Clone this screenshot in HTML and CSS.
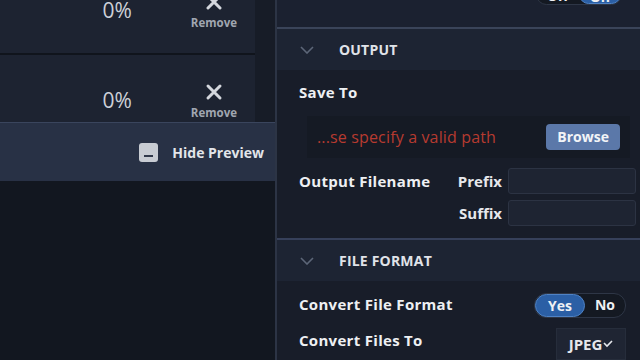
FILE: index.html
```html
<!DOCTYPE html>
<html lang="en">
	<head>
		<meta charset="UTF-8" />
		<meta name="viewport" content="width=device-width, initial-scale=1.0" />
		<title>Export</title>
		<link rel="stylesheet" href="styles.css">
	</head>
	<body>
		<div class="left">
			<div class="jobs">
				<div class="job-list">
					<div class="job">
						<span class="progress">0%</span>
						<button class="remove">
							<svg width="18" height="18" viewBox="0 0 18 18"><path d="M3 3 L15 15 M15 3 L3 15" stroke="#d4d7dd" stroke-width="3" stroke-linecap="round"/></svg>
							<span>Remove</span>
						</button>
					</div>
					<div class="job">
						<span class="progress">0%</span>
						<button class="remove">
							<svg width="18" height="18" viewBox="0 0 18 18"><path d="M3 3 L15 15 M15 3 L3 15" stroke="#d4d7dd" stroke-width="3" stroke-linecap="round"/></svg>
							<span>Remove</span>
						</button>
					</div>
				</div>
				<div class="gutter"></div>
			</div>
			<div class="preview-bar">
				<span class="preview-icon"><i></i></span>
				<span>Hide Preview</span>
			</div>
			<div class="preview-area"></div>
		</div>

		<div class="right">
			<div class="top-section">
				<div class="switch small">
					<span>Off</span>
					<span class="on">On</span>
				</div>
			</div>

			<div class="section-head">
				<svg width="14" height="8" viewBox="0 0 14 8"><path d="M1 1 L7 7 L13 1" fill="none" stroke="#5c6678" stroke-width="1.6"/></svg>
				<span>OUTPUT</span>
			</div>
			<div class="section-body">
				<div class="label">Save To</div>
				<div class="path-box">
					<span class="path-error">...se specify a valid path</span>
					<button class="browse">Browse</button>
				</div>
				<div class="filename">
					<div class="label">Output Filename</div>
					<div class="fields">
						<label>Prefix <input type="text" /></label>
						<label>Suffix <input type="text" /></label>
					</div>
				</div>
			</div>

			<div class="section-head">
				<svg width="14" height="8" viewBox="0 0 14 8"><path d="M1 1 L7 7 L13 1" fill="none" stroke="#5c6678" stroke-width="1.6"/></svg>
				<span>FILE FORMAT</span>
			</div>
			<div class="section-body format">
				<div class="row">
					<div class="label">Convert File Format</div>
					<div class="switch">
						<span class="on">Yes</span>
						<span>No</span>
					</div>
				</div>
				<div class="row">
					<div class="label">Convert Files To</div>
					<div class="select">JPEG<svg width="10" height="8" viewBox="0 0 10 8"><path d="M1 3 L4 6 L9 1" fill="none" stroke="#e6e8ec" stroke-width="1.6"/></svg></div>
				</div>
			</div>
		</div>
	</body>
</html>
```

FILE: styles.css
```css
* {
	box-sizing: border-box;
}
body {
	margin: 0;
	width: 640px;
	height: 360px;
	overflow: hidden;
	display: flex;
	font-family: "Open Sans", Arial, sans-serif;
	background: #131820;
	color: #e6e8ec;
}
.left {
	width: 275px;
	display: flex;
	flex-direction: column;
}
.jobs {
	height: 122px;
	overflow: hidden;
	display: flex;
}
.job-list {
	flex: 1;
	margin-top: -35px;
}
.job {
	height: 90px;
	background: #1d2331;
	border-bottom: 2px solid #10141c;
	display: flex;
	justify-content: flex-end;
	align-items: flex-start;
	padding: 28px 18px 0 0;
	gap: 59px;
}
.progress {
	font-size: 21px;
	line-height: 28px;
	color: #cdd1d8;
	margin-top: 3px;
}
.remove {
	background: none;
	border: none;
	padding: 0;
	display: flex;
	flex-direction: column;
	align-items: center;
	gap: 5px;
	font-family: inherit;
	font-weight: bold;
	font-size: 11.5px;
	line-height: 14px;
	color: #a0a6b0;
}
.gutter {
	width: 20px;
	background: #171c27;
}
.preview-bar {
	height: 59px;
	background: #283145;
	border-top: 1px solid #3a455d;
	display: flex;
	align-items: center;
	justify-content: flex-end;
	gap: 14px;
	padding-right: 11px;
	font-weight: bold;
	font-size: 14px;
	color: #e2e5ea;
}
.preview-icon {
	width: 19px;
	height: 19px;
	border-radius: 3px;
	background: #c8ccd3;
	display: flex;
	align-items: flex-end;
	justify-content: center;
	padding-bottom: 5px;
}
.preview-icon i {
	width: 9px;
	height: 2px;
	background: #30384a;
}
.preview-area {
	flex: 1;
	background: #121720;
}
.right {
	flex: 1;
	background: #1b2130;
	border-left: 2px solid #2c3445;
}
.top-section {
	height: 29px;
	border-bottom: 2px solid #3a4459;
	display: flex;
	justify-content: flex-end;
	padding-right: 18px;
}
.switch {
	display: flex;
	border: 1px solid #2e3646;
	border-radius: 12px;
	background: #141922;
	font-weight: bold;
	font-size: 14px;
	line-height: 19px;
}
.switch span {
	padding: 1px 10px;
	border-radius: 12px;
	color: #eef0f3;
}
.switch .on {
	background: #2b5fa5;
	border: 1px solid #4f82c4;
}
.switch.small {
	margin-top: -16px;
	height: 21px;
}
.section-head {
	height: 41px;
	background: #1d2433;
	display: flex;
	align-items: center;
	gap: 25px;
	padding-left: 23px;
	font-weight: bold;
	font-size: 14px;
	letter-spacing: 0.2px;
	color: #e0e3e9;
}
.section-body {
	background: #181d29;
	padding: 12px 4px 12px 22px;
	border-bottom: 2px solid #36405a;
}
.label {
	font-weight: bold;
	font-size: 15px;
	line-height: 20px;
	letter-spacing: 0.3px;
	color: #eef0f3;
}
.path-box {
	margin: 14px 6px 0 8px;
	height: 42px;
	background: #151a24;
	display: flex;
	align-items: center;
	justify-content: space-between;
	padding: 0 10px 0 10px;
}
.path-error {
	color: #b73a30;
	font-size: 16px;
	letter-spacing: 0.15px;
}
.browse {
	background: #5b78a9;
	border: none;
	border-radius: 4px;
	color: #f2f4f7;
	font-family: inherit;
	font-weight: bold;
	font-size: 14px;
	line-height: 18px;
	padding: 4px 11px;
}
.filename {
	display: flex;
	justify-content: space-between;
	align-items: flex-start;
	margin-top: 10px;
}
.filename .label {
	margin-top: 3px;
}
.fields {
	display: flex;
	flex-direction: column;
	align-items: flex-end;
	gap: 6px;
}
.fields label {
	display: flex;
	align-items: center;
	gap: 6px;
	font-weight: bold;
	font-size: 15px;
}
.fields input {
	width: 128px;
	height: 26px;
	background: #1e2432;
	border: 1px solid #2c3343;
	border-radius: 3px;
}
.format {
	border-bottom: none;
	padding: 12px 14px 0 22px;
}
.format .row {
	display: flex;
	justify-content: space-between;
	align-items: center;
}
.format .row:first-child .label {
	margin-bottom: 4px;
}
.format .row:first-child .switch span.on {
	padding: 1px 12px;
}
.format .row + .row {
	align-items: flex-start;
}
.format .row + .row .label {
	margin-top: 12px;
}
.select {
	margin-top: 10px;
	width: 70px;
	height: 32px;
	background: #1f2533;
	border: 1px solid #262d3b;
	display: flex;
	align-items: center;
	justify-content: center;
	gap: 1px;
	font-weight: bold;
	font-size: 15px;
}
```
